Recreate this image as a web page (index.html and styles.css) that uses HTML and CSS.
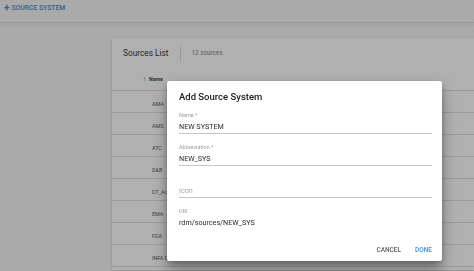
FILE: index.html
```html
<!DOCTYPE html>
<html lang="en">
<head>
<meta charset="UTF-8">
<meta name="viewport" content="width=device-width, initial-scale=1.0">
<title>Source Systems</title>
<link rel="stylesheet" href="styles.css">
</head>
<body>

<header class="toolbar">
    <button type="button" class="add-btn"><span class="plus">+</span> SOURCE SYSTEM</button>
</header>

<main class="main">
    <section class="card">
        <div class="card-head">
            <h2>Sources List</h2>
            <span class="divider"></span>
            <span class="count">12 sources</span>
        </div>
        <div class="col-head"><span class="arrow">&#8593;</span>Name</div>
        <ul class="rows">
            <li>AMA</li>
            <li>AMS</li>
            <li>ATC</li>
            <li>D&amp;B</li>
            <li>DT_Ac</li>
            <li>EMA</li>
            <li>FDA</li>
            <li>INFA D</li>
        </ul>
    </section>
</main>

<!-- modal -->
<div class="overlay"></div>
<form class="dialog">
    <h3>Add Source System</h3>

    <div class="field">
        <label>Name *</label>
        <div class="value">NEW SYSTEM</div>
    </div>
    <div class="field">
        <label>Abbreviation *</label>
        <div class="value">NEW_SYS</div>
    </div>
    <div class="field">
        <label></label>
        <div class="value placeholder">Icon</div>
    </div>
    <div class="field plain">
        <label>URI</label>
        <div class="value">rdm/sources/NEW_SYS</div>
    </div>

    <div class="actions">
        <button type="button" class="cancel">CANCEL</button>
        <button type="button" class="done">DONE</button>
    </div>
</form>

</body>
</html>
```

FILE: styles.css
```css
body {
    font-family: Roboto, "Liberation Sans", Arial, sans-serif;
    margin: 0;
    width: 474px;
    height: 271px;
    overflow: hidden;
    background: #f6f6f6;
}

.toolbar {
    height: 23px;
    padding: 2px 0 0 4px;
    box-sizing: border-box;
    border-bottom: 1px solid #dcdcdc;
    box-shadow: 0 3px 2px rgba(0, 0, 0, 0.04);
}
.add-btn {
    display: flex;
    align-items: center;
    gap: 2px;
    height: 12px;
    border: 0;
    background: none;
    padding: 0;
    font-family: inherit;
    font-size: 6.8px;
    font-weight: 500;
    color: #3f8fd8;
}
.plus {
    font-size: 10px;
    font-weight: 700;
    line-height: 12px;
}

.main {
    padding: 15px 0 0 112px;
}
.card {
    height: 232px;
    overflow: hidden;
    background: #fff;
    border-radius: 2px 0 0 0;
    box-shadow: 0 1px 3px rgba(0, 0, 0, 0.2);
}
.card-head {
    height: 29px;
    display: flex;
    align-items: center;
    padding: 0 0 0 11px;
    box-sizing: border-box;
}
.card-head h2 {
    margin: 0;
    font-size: 8.3px;
    font-weight: 400;
    color: #3a3a3a;
}
.divider {
    width: 1px;
    height: 16px;
    background: #ddd;
    margin: 0 11px 0 11px;
}
.count {
    font-size: 6.3px;
    color: #8a8a8a;
}
.col-head {
    height: 23px;
    line-height: 23px;
    padding-left: 31px;
    font-size: 5.2px;
    font-weight: 700;
    color: #444;
    border-bottom: 1px solid #e0e0e0;
}
.arrow {
    font-size: 6px;
    margin-right: 3px;
}
.rows {
    list-style: none;
    margin: 0;
    padding: 0;
}
.rows li {
    height: 22px;
    box-sizing: border-box;
    padding: 4px 0 0 40px;
    line-height: 18px;
    font-size: 5.4px;
    color: #606060;
    border-bottom: 1px solid #e0e0e0;
}

.overlay {
    position: fixed;
    inset: 0;
    background: rgba(0, 0, 0, 0.31);
}

.dialog {
    position: absolute;
    left: 167px;
    top: 81px;
    width: 275px;
    height: 180px;
    box-sizing: border-box;
    padding: 9px 10px 6px 12px;
    background: #fff;
    border-radius: 2px;
    box-shadow: 0 8px 14px rgba(0, 0, 0, 0.35), 0 2px 5px rgba(0, 0, 0, 0.2);
    display: flex;
    flex-direction: column;
}
.dialog h3 {
    margin: 0 0 8px 0;
    font-size: 9.5px;
    font-weight: 500;
    line-height: 14px;
    color: #212121;
}
.field {
    margin-bottom: 10px;
    border-bottom: 1px solid #c6c6c6;
    padding-bottom: 1px;
}
.field.plain {
    border-bottom: 0;
}
.field label {
    display: block;
    height: 7px;
    font-size: 5.5px;
    line-height: 7px;
    color: #9e9e9e;
}
.value {
    margin-top: 2px;
    font-size: 7.2px;
    line-height: 11px;
    color: #2a2a2a;
}
.value.placeholder {
    color: #a6a6a6;
}

.actions {
    margin-top: auto;
    display: flex;
    justify-content: flex-end;
    gap: 14px;
}
.actions button {
    border: 0;
    background: none;
    padding: 0;
    font-family: inherit;
    font-size: 6.5px;
    font-weight: 500;
    line-height: 10px;
}
.cancel {
    color: #616161;
}
.done {
    color: #2f96ef;
}
```
